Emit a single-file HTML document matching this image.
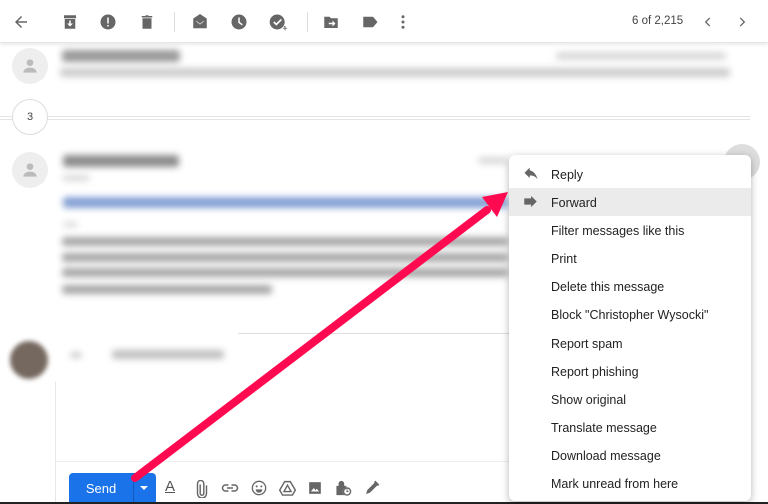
<!DOCTYPE html>
<html><head><meta charset="utf-8"><style>
*{margin:0;padding:0;box-sizing:border-box}
body{width:768px;height:504px;overflow:hidden;background:#fff;font-family:"Liberation Sans",Arial,sans-serif;position:relative}
.a{position:absolute}
.bar{position:absolute;background:#999;filter:blur(3.5px);border-radius:3px;opacity:.75}
.ic{position:absolute;fill:#666}
.menu{position:absolute;left:509px;top:155px;width:242px;height:346px;background:#fff;border-radius:6px;box-shadow:0 2px 8px rgba(0,0,0,.3)}
.mi{position:absolute;left:0;width:242px;height:28px;line-height:30px;padding-left:42px;font-size:12.5px;color:#222}
</style></head><body>
<div class="a" style="left:0;top:0;width:768px;height:43px;border-bottom:1px solid #e6e6e6;box-shadow:0 2px 3px rgba(0,0,0,.08)"></div>
<svg class="ic" style="left:12px;top:13px" width="18" height="18" viewBox="0 0 24 24"><path d="M20 11H7.8l5.6-5.6L12 4l-8 8 8 8 1.4-1.4L7.8 13H20z"/></svg>
<svg class="ic" style="left:61px;top:13px" width="18" height="18" viewBox="0 0 24 24"><path d="M4 3h16v4H4zM5 8h14v13H5zM12 18l4-4h-3V10h-2v4H8z" fill-rule="evenodd"/></svg>
<svg class="ic" style="left:99px;top:13px" width="18" height="18" viewBox="0 0 24 24"><circle cx="12" cy="12" r="10"/><rect x="11" y="6" width="2" height="8" fill="#fff"/><rect x="11" y="16" width="2" height="2" fill="#fff"/></svg>
<svg class="ic" style="left:138px;top:13px" width="18" height="18" viewBox="0 0 24 24"><path d="M6 7h12v14H6zM5 4h14v2H5zM10 3h4v1h-4z"/></svg>
<div class="a" style="left:174px;top:12px;width:1px;height:20px;background:#ddd"></div>
<svg class="ic" style="left:191px;top:12px" width="18" height="19" viewBox="0 0 24 24"><path d="M12 2l9 6v13H3V8zM7 12l5 4 5-4v-1l-5 4-5-4z"/></svg>
<svg class="ic" style="left:230px;top:13px" width="18" height="18" viewBox="0 0 24 24"><circle cx="12" cy="12" r="10"/><path d="M11 6h2v6l4 3-1 1.5-5-3.5z" fill="#fff"/></svg>
<svg class="ic" style="left:268px;top:12px" width="20" height="20" viewBox="0 0 24 24"><circle cx="11" cy="12" r="9"/><path d="M7 12l3 3 6-6" stroke="#fff" stroke-width="2" fill="none"/><path d="M19 17h2v2h2v1h-2v2h-1v-2h-2v-1h2z"/></svg>
<div class="a" style="left:307px;top:12px;width:1px;height:20px;background:#ddd"></div>
<svg class="ic" style="left:322px;top:13px" width="18" height="18" viewBox="0 0 24 24"><path d="M3 5h7l2 2h9v13H3z"/><path d="M9 13h5v-3l4 4-4 4v-3H9z" fill="#fff"/></svg>
<svg class="ic" style="left:361px;top:14px" width="18" height="16" viewBox="0 0 24 20"><path d="M3 3h13l6 7-6 7H3z"/></svg>
<svg class="ic" style="left:398px;top:13px" width="10" height="18" viewBox="0 0 10 24"><circle cx="5" cy="5" r="2"/><circle cx="5" cy="12" r="2"/><circle cx="5" cy="19" r="2"/></svg>
<div class="a" style="left:632px;top:15px;font-size:11.5px;color:#444">6 of 2,215</div>
<svg class="ic" style="left:701px;top:14px" width="14" height="16" viewBox="0 0 24 24"><path d="M15 5l-7 7 7 7" stroke="#666" stroke-width="2.2" fill="none"/></svg>
<svg class="ic" style="left:735px;top:14px" width="14" height="16" viewBox="0 0 24 24"><path d="M9 5l7 7-7 7" stroke="#666" stroke-width="2.2" fill="none"/></svg>

<div class="a" style="left:12px;top:48px;width:36px;height:36px;border-radius:50%;background:#eee"></div>
<svg class="ic" style="left:20px;top:56px;fill:#bbb" width="20" height="20" viewBox="0 0 24 24"><circle cx="12" cy="8" r="4"/><path d="M4 20c0-4 4-6 8-6s8 2 8 6z"/></svg>
<div class="bar" style="left:62px;top:50px;width:118px;height:12px;background:#777"></div>
<div class="bar" style="left:60px;top:68px;width:670px;height:9px;background:#bbb"></div>
<div class="bar" style="left:556px;top:52px;width:170px;height:8px;background:#ccc"></div>
<div class="a" style="left:0;top:116px;width:750px;height:1px;background:#e4e4e4"></div>
<div class="a" style="left:0;top:119px;width:750px;height:1px;background:#e4e4e4"></div>
<div class="a" style="left:12px;top:99px;width:36px;height:36px;border-radius:50%;background:#fff;border:1px solid #ddd;text-align:center;line-height:34px;font-size:11px;color:#444">3</div>

<div class="a" style="left:12px;top:152px;width:36px;height:36px;border-radius:50%;background:#eee"></div>
<svg class="ic" style="left:20px;top:160px;fill:#bbb" width="20" height="20" viewBox="0 0 24 24"><circle cx="12" cy="8" r="4"/><path d="M4 20c0-4 4-6 8-6s8 2 8 6z"/></svg>
<div class="bar" style="left:63px;top:155px;width:116px;height:12px;background:#666"></div>
<div class="bar" style="left:62px;top:175px;width:28px;height:6px;background:#ccc"></div>
<div class="bar" style="left:478px;top:157px;width:30px;height:7px;background:#ccc"></div>
<div class="a" style="left:724px;top:144px;width:36px;height:36px;border-radius:50%;background:#ddd"></div>
<div class="bar" style="left:63px;top:197px;width:445px;height:11px;background:#5a7fc4"></div>
<div class="bar" style="left:63px;top:222px;width:15px;height:5px;background:#ccc"></div>
<div class="bar" style="left:62px;top:237px;width:446px;height:9px;background:#888"></div>
<div class="bar" style="left:62px;top:253px;width:446px;height:9px;background:#888"></div>
<div class="bar" style="left:62px;top:268px;width:446px;height:9px;background:#888"></div>
<div class="bar" style="left:62px;top:285px;width:210px;height:9px;background:#888"></div>

<div class="a" style="left:238px;top:333px;width:272px;height:1px;background:#ddd"></div>
<div class="a" style="left:10px;top:341px;width:38px;height:38px;border-radius:50%;background:#75685f;filter:blur(2.5px)"></div>
<div class="bar" style="left:70px;top:352px;width:12px;height:6px;background:#bbb"></div>
<div class="bar" style="left:112px;top:350px;width:112px;height:9px;background:#aaa"></div>
<div class="a" style="left:55px;top:382px;width:1px;height:122px;background:#e8e8e8"></div>
<div class="a" style="left:56px;top:461px;width:454px;height:1px;background:#eee"></div>
<div class="a" style="left:69px;top:473px;width:87px;height:31px;background:#1a73e8;border-radius:4px 4px 0 0"></div>
<div class="a" style="left:69px;top:481px;width:64px;text-align:center;font-size:13px;color:#fff">Send</div>
<div class="a" style="left:133px;top:473px;width:1px;height:31px;background:#1558c0"></div>
<div class="a" style="left:140px;top:486px;border-left:4px solid transparent;border-right:4px solid transparent;border-top:4px solid #fff"></div>
<div class="a" style="left:165px;top:478px;font-size:15px;color:#555;text-decoration:underline">A</div>
<svg class="ic" style="left:196px;top:480px" width="12" height="18" viewBox="0 0 12 20"><path d="M4 5v10a2 2 0 004 0V4a3.5 3.5 0 00-7 0v11a5 5 0 0010 0V6" stroke="#666" stroke-width="1.6" fill="none"/></svg>
<svg class="ic" style="left:221px;top:481px" width="18" height="14" viewBox="0 0 24 16"><path d="M10 4H6a4 4 0 000 8h4M14 4h4a4 4 0 010 8h-4M8 8h8" stroke="#666" stroke-width="2" fill="none"/></svg>
<svg class="ic" style="left:251px;top:480px" width="16" height="16" viewBox="0 0 24 24"><circle cx="12" cy="12" r="10" stroke="#666" stroke-width="2" fill="none"/><circle cx="8.5" cy="9.5" r="1.5"/><circle cx="15.5" cy="9.5" r="1.5"/><path d="M7 14a5 5 0 0010 0z"/></svg>
<svg class="ic" style="left:279px;top:480px" width="17" height="16" viewBox="0 0 24 22"><path d="M8 2h8l7 12-4 7H5l-4-7z M12 7l-5 9h10z" stroke="#666" stroke-width="2" fill="none"/></svg>
<svg class="ic" style="left:308px;top:481px" width="14" height="14" viewBox="0 0 24 24"><path d="M2 2h20v20H2z"/><path d="M5 18l5-6 3 4 2-3 4 5z" fill="#fff"/></svg>
<svg class="ic" style="left:335px;top:479px" width="17" height="18" viewBox="0 0 24 24"><path d="M3 10h12v11H3zM6 10V6a3 3 0 016 0v4" stroke="#666" stroke-width="2"/><circle cx="17" cy="17" r="6" fill="#fff"/><circle cx="17" cy="17" r="5" stroke="#666" stroke-width="2" fill="none"/><path d="M17 14v3h2" stroke="#666" stroke-width="1.5" fill="none"/></svg>
<svg class="ic" style="left:364px;top:480px" width="16" height="16" viewBox="0 0 24 24"><path d="M3 21l2-6L16 4l4 4L9 19z M15 3l2-2 6 6-2 2z"/></svg>
<div class="a" style="left:0;top:502px;width:768px;height:2px;background:#222"></div>

<div class="menu">
<div class="mi" style="top:5px">Reply</div>
<div class="mi" style="top:33px;background:#ebebeb">Forward</div>
<div class="mi" style="top:61px">Filter messages like this</div>
<div class="mi" style="top:89px">Print</div>
<div class="mi" style="top:117px">Delete this message</div>
<div class="mi" style="top:145px">Block "Christopher Wysocki"</div>
<div class="mi" style="top:174px">Report spam</div>
<div class="mi" style="top:202px">Report phishing</div>
<div class="mi" style="top:230px">Show original</div>
<div class="mi" style="top:258px">Translate message</div>
<div class="mi" style="top:286px">Download message</div>
<div class="mi" style="top:314px">Mark unread from here</div>
<svg class="ic" style="left:14px;top:12px" width="16" height="13" viewBox="0 0 24 20"><path d="M10 5V1L2 9l8 8v-4c5 0 9 1 12 6-1-6-5-12-12-14z"/></svg>
<svg class="ic" style="left:14px;top:40px" width="15" height="13" viewBox="0 0 24 20"><path d="M2 5h11V1l9 9-9 9v-4H2z"/></svg>
</div>

<svg class="a" style="left:0;top:0" width="768" height="504"><line x1="135" y1="478" x2="487" y2="210" stroke="#ff0a50" stroke-width="8" stroke-linecap="round"/><path d="M508 192l-11 25-15-20z" fill="#ff0a50"/></svg>
</body></html>
